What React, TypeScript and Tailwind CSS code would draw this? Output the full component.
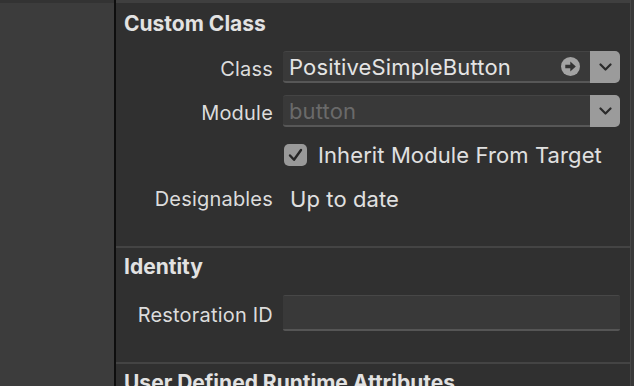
import { ReactNode } from 'react'

const font = { fontFamily: 'Inter, "Liberation Sans", sans-serif' }

function Chevron() {
  return (
    <svg className="h-[8px] w-[13px]" viewBox="0 0 13 8" fill="none">
      <path d="M1.5 1.5 6.5 6.5 11.5 1.5" stroke="#2b2b2b" strokeWidth={2.2} strokeLinecap="round" strokeLinejoin="round" />
    </svg>
  )
}

function ArrowCircle() {
  return (
    <svg className="h-[19px] w-[19px]" viewBox="0 0 20 20">
      <circle cx="10" cy="10" r="10" fill="#a3a3a3" />
      <path d="M4.5 8.2h5.3V4.8L15.6 10l-5.8 5.2v-3.4H4.5z" fill="#333333" />
    </svg>
  )
}

function Popup({ value, dim, arrow }: { value: string; dim?: boolean; arrow?: boolean }) {
  return (
    <div className="flex h-[32px] w-[337px]">
      <div className="flex flex-1 items-center rounded-l-[3px] border-t border-[#444] border-b-2 border-b-[#575757] bg-[#393939] pl-[6px] pr-[10px]">
        <span className={`flex-1 text-[22px] leading-none tracking-[0.15px] ${dim ? 'text-[#6a6a6a]' : 'text-[#e4e4e4]'}`}>{value}</span>
        {arrow && <ArrowCircle />}
      </div>
      <div className="flex w-[30px] items-center justify-center rounded-r-[5px] bg-[#9b9b9b]">
        <Chevron />
      </div>
    </div>
  )
}

function Row({ label, children, low }: { label: string; children: ReactNode; low?: boolean }) {
  return (
    <div className="grid h-[44px] shrink-0 grid-cols-[157px_1fr] items-center gap-x-[10px]">
      <div className={`text-right text-[20px] tracking-[0.2px] text-[#dcdcdc] ${low ? 'pt-[4px]' : ''}`}>{label}</div>
      <div className="flex items-center">{children}</div>
    </div>
  )
}

function Heading({ children }: { children: ReactNode }) {
  return <div className="flex h-[38px] shrink-0 items-center pl-[8px] text-[21px] font-bold text-[#e2e2e2]">{children}</div>
}

export default function App() {
  return (
    <div className="flex h-[386px] w-[634px] overflow-hidden bg-[#303030]" style={font}>
      <div className="w-[114px] border-t-[3px] border-[#333] bg-[#3c3c3c]" />
      <div className="w-[2px] bg-[#0e0e0e]" />

      <div className="flex flex-1 flex-col border-t-[3px] border-[#3f3f3f] pr-[10px]">
        <div className="flex h-[42px] shrink-0 items-center pl-[8px] text-[21px] font-bold text-[#e2e2e2]">Custom Class</div>
        <Row label="Class" low>
          <Popup value="PositiveSimpleButton" arrow />
        </Row>
        <Row label="Module" low>
          <Popup value="button" dim />
        </Row>
        <Row label="">
          <div className="flex items-center gap-[11px] pl-[1px]">
            <div className="flex h-[22px] w-[23px] items-center justify-center rounded-[5px] bg-[#999999]">
              <svg className="h-[14px] w-[15px]" viewBox="0 0 15 14" fill="none">
                <path d="M2 7.5 6 11.8 13 2" stroke="#262626" strokeWidth={2.4} strokeLinecap="round" strokeLinejoin="round" />
              </svg>
            </div>
            <span className="text-[22px] tracking-[0.1px] text-[#e0e0e0]">Inherit Module From Target</span>
          </div>
        </Row>
        <Row label="Designables">
          <span className="pl-[7px] text-[22px] tracking-[0.1px] text-[#e0e0e0]">Up to date</span>
        </Row>
        <div className="h-[25px] shrink-0" />
        <div className="mr-[-10px] h-[2px] shrink-0 bg-[#444]" />

        <Heading>Identity</Heading>
        <div className="grid shrink-0 grid-cols-[157px_1fr] items-center gap-x-[10px] pt-[9px]">
          <div className="pt-[3px] text-right text-[20px] tracking-[0.2px] text-[#dcdcdc]">Restoration ID</div>
          <div className="h-[36px] w-[337px] rounded-[2px] border-t border-[#474747] border-b-2 border-b-[#555] bg-[#393939]" />
        </div>
        <div className="h-[31px] shrink-0" />
        <div className="mr-[-10px] h-[2px] shrink-0 bg-[#444]" />
        <Heading>User Defined Runtime Attributes</Heading>
      </div>

      <div className="w-[4px] border-l border-[#464646] bg-[#383838]" />
    </div>
  )
}
